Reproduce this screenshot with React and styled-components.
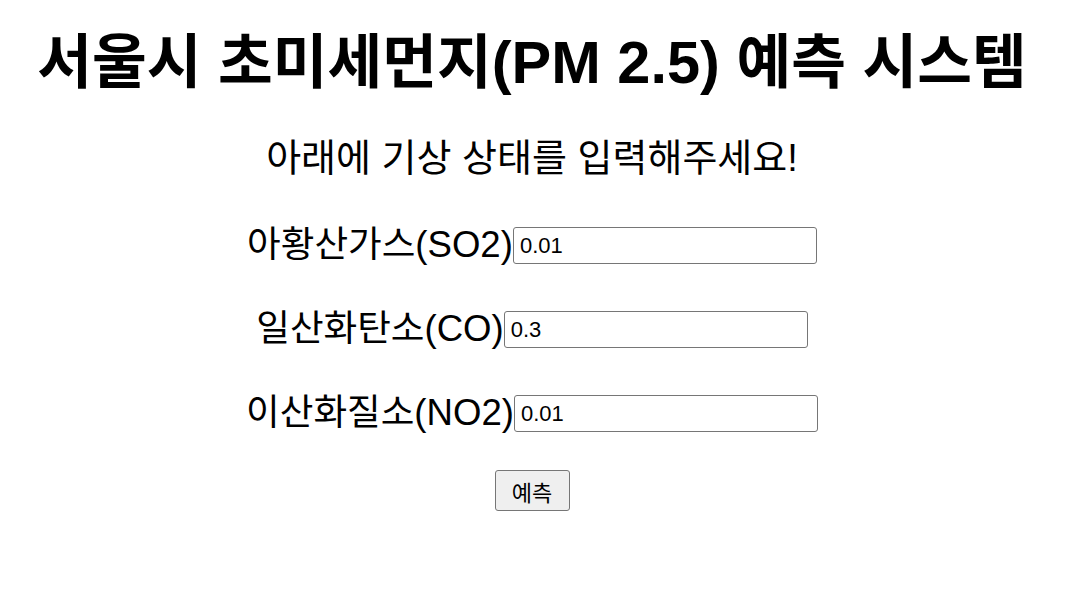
import styled, { createGlobalStyle } from 'styled-components';

const GlobalStyle = createGlobalStyle`
  body {
    margin: 8px;
    background: #ffffff;
    color: #000000;
    font-family: "Liberation Sans", "Noto Sans CJK KR", sans-serif;
  }
`;

const Page = styled.div`
  width: 1048px;
  text-align: center;
`;

const Title = styled.h1`
  font-size: 59.5px;
  font-weight: bold;
  margin: 15px 0 0;
  line-height: 80px;
  white-space: nowrap;
`;

const Subtitle = styled.p`
  font-size: 38px;
  margin: 33px 0 0;
  line-height: 44px;
`;

const Form = styled.form`
  display: flex;
  flex-direction: column;
  align-items: center;
`;

const Field = styled.div`
  display: flex;
  align-items: center;
  justify-content: center;
  margin-top: ${props => props.$first ? '45px' : '44px'};
  height: 40px;
`;

const Label = styled.label`
  font-size: 36.6px;
  line-height: 40px;
`;

const Input = styled.input`
  width: 304px;
  height: 37px;
  box-sizing: border-box;
  font-size: 22px;
  font-family: "Liberation Sans", "Noto Sans CJK KR", sans-serif;
  border: 1px solid #767676;
  border-radius: 3px;
  padding: 1px 6px 0;
  color: #000;
`;

const Button = styled.button`
  margin-top: 37px;
  width: 75px;
  height: 41px;
  font-size: 22px;
  font-family: "Liberation Sans", "Noto Sans CJK KR", sans-serif;
  background: #efefef;
  border: 1px solid #767676;
  border-radius: 3px;
  color: #000;
  padding: 0;
`;

const fields = [
  { id: 'so2', label: '아황산가스(SO2)', value: '0.01' },
  { id: 'co', label: '일산화탄소(CO)', value: '0.3' },
  { id: 'no2', label: '이산화질소(NO2)', value: '0.01' },
];

export default function App() {
  return (
    <Page>
      <GlobalStyle />
      <Title>서울시 초미세먼지(PM 2.5) 예측 시스템</Title>
      <Subtitle>아래에 기상 상태를 입력해주세요!</Subtitle>
      <Form onSubmit={e => e.preventDefault()}>
        {fields.map((f, i) => (
          <Field key={f.id} $first={i === 0}>
            <Label htmlFor={f.id}>{f.label}</Label>
            <Input id={f.id} defaultValue={f.value} />
          </Field>
        ))}
        <Button type="submit">예측</Button>
      </Form>
    </Page>
  );
}
